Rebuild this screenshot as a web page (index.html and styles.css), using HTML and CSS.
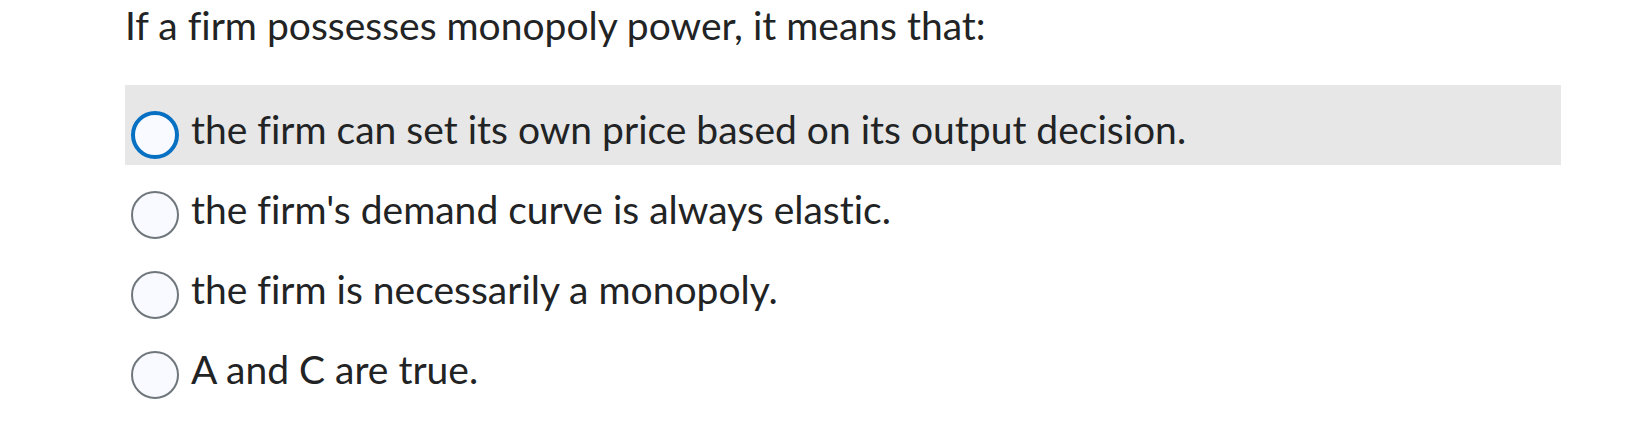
FILE: index.html
```html
<!DOCTYPE html>
<html>
<head>
<meta charset="utf-8">
<link rel="stylesheet" href="styles.css">
</head>
<body>
<div class="question">
  <div class="prompt">If a firm possesses monopoly power, it means that:</div>
  <div class="options">
    <label class="option selected"><span class="radio"></span><span class="text">the firm can set its own price based on its output decision.</span></label>
    <label class="option"><span class="radio"></span><span class="text">the firm's demand curve is always elastic.</span></label>
    <label class="option"><span class="radio"></span><span class="text">the firm is necessarily a monopoly.</span></label>
    <label class="option"><span class="radio"></span><span class="text">A and C are true.</span></label>
  </div>
</div>
</body>
</html>
```

FILE: styles.css
```css
html, body {
  margin: 0;
  padding: 0;
  background: #ffffff;
}
body {
  font-family: Lato, "Open Sans", sans-serif;
  font-variant-ligatures: none;
  font-feature-settings: "liga" 0;
  color: #222324;
  width: 1640px;
  height: 421px;
  overflow: hidden;
}
.question {
  padding: 2px 79px 0 125px;
}
.prompt {
  font-size: 39px;
  line-height: 46px;
  height: 83px;
}
.options {
  display: flex;
  flex-direction: column;
}
.option {
  display: flex;
  align-items: flex-start;
  height: 80px;
  box-sizing: border-box;
  padding: 21px 0 0 6px;
}
.option.selected {
  background: #e7e7e7;
}
.radio {
  flex: none;
  width: 44px;
  height: 44px;
  border: 2px solid #6f777d;
  border-radius: 50%;
  background: #f8faff;
  margin-top: 5px;
  margin-right: 12px;
}
.option.selected .radio {
  width: 40px;
  height: 40px;
  border: 4px solid #0770c2;
}
.text {
  font-size: 39px;
  line-height: 46px;
}
```
